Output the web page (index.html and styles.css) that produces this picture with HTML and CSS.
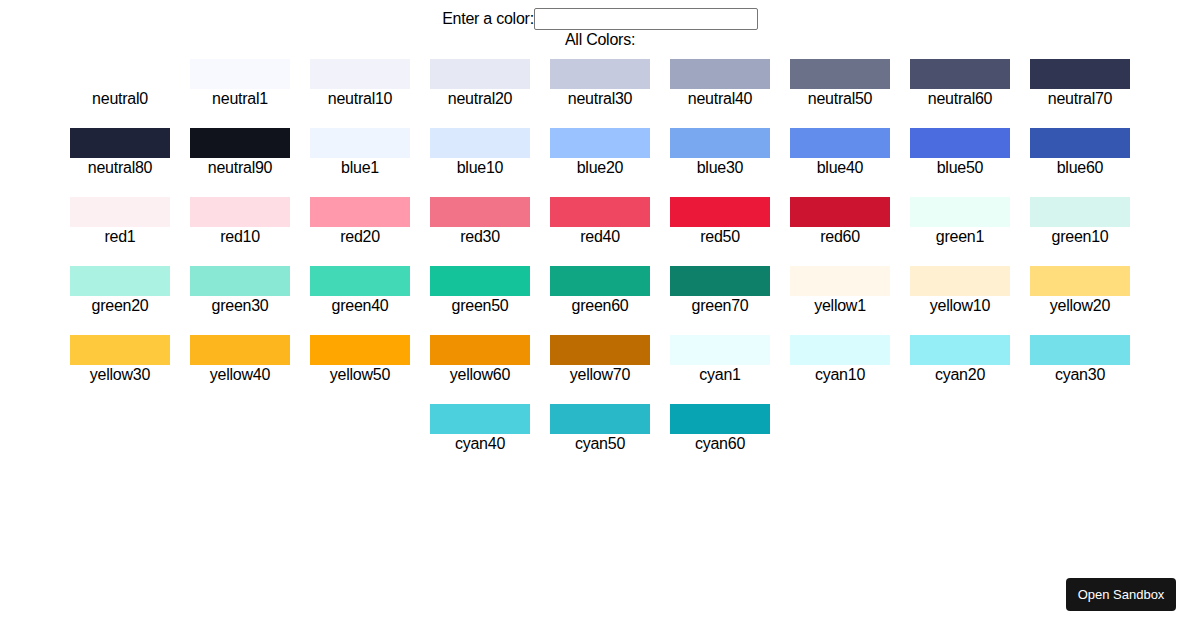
FILE: index.html
```html
<!DOCTYPE html>
<html>
<head>
<meta charset="utf-8">
<link rel="stylesheet" href="styles.css">
</head>
<body>
<div class="header">
  <label class="prompt">Enter a color:<input class="color-input" type="text"></label>
  <div class="title">All Colors:</div>
</div>
<div class="grid">
  <div class="item"><div class="swatch" style="background:#ffffff"></div><div class="name">neutral0</div></div>
  <div class="item"><div class="swatch" style="background:#f8f9fe"></div><div class="name">neutral1</div></div>
  <div class="item"><div class="swatch" style="background:#f1f2fa"></div><div class="name">neutral10</div></div>
  <div class="item"><div class="swatch" style="background:#e6e8f4"></div><div class="name">neutral20</div></div>
  <div class="item"><div class="swatch" style="background:#c6cade"></div><div class="name">neutral30</div></div>
  <div class="item"><div class="swatch" style="background:#9fa6c0"></div><div class="name">neutral40</div></div>
  <div class="item"><div class="swatch" style="background:#6a7189"></div><div class="name">neutral50</div></div>
  <div class="item"><div class="swatch" style="background:#4b506d"></div><div class="name">neutral60</div></div>
  <div class="item"><div class="swatch" style="background:#303651"></div><div class="name">neutral70</div></div>
  <div class="item"><div class="swatch" style="background:#1f233a"></div><div class="name">neutral80</div></div>
  <div class="item"><div class="swatch" style="background:#10121c"></div><div class="name">neutral90</div></div>
  <div class="item"><div class="swatch" style="background:#eef5ff"></div><div class="name">blue1</div></div>
  <div class="item"><div class="swatch" style="background:#dbe9ff"></div><div class="name">blue10</div></div>
  <div class="item"><div class="swatch" style="background:#99c2ff"></div><div class="name">blue20</div></div>
  <div class="item"><div class="swatch" style="background:#79a8f1"></div><div class="name">blue30</div></div>
  <div class="item"><div class="swatch" style="background:#628dec"></div><div class="name">blue40</div></div>
  <div class="item"><div class="swatch" style="background:#4a6cdf"></div><div class="name">blue50</div></div>
  <div class="item"><div class="swatch" style="background:#3657b1"></div><div class="name">blue60</div></div>
  <div class="item"><div class="swatch" style="background:#fcf0f3"></div><div class="name">red1</div></div>
  <div class="item"><div class="swatch" style="background:#ffdde4"></div><div class="name">red10</div></div>
  <div class="item"><div class="swatch" style="background:#ff99ab"></div><div class="name">red20</div></div>
  <div class="item"><div class="swatch" style="background:#f27388"></div><div class="name">red30</div></div>
  <div class="item"><div class="swatch" style="background:#ef4662"></div><div class="name">red40</div></div>
  <div class="item"><div class="swatch" style="background:#ec1839"></div><div class="name">red50</div></div>
  <div class="item"><div class="swatch" style="background:#cc1330"></div><div class="name">red60</div></div>
  <div class="item"><div class="swatch" style="background:#e9fff7"></div><div class="name">green1</div></div>
  <div class="item"><div class="swatch" style="background:#d5f5ee"></div><div class="name">green10</div></div>
  <div class="item"><div class="swatch" style="background:#abf2e3"></div><div class="name">green20</div></div>
  <div class="item"><div class="swatch" style="background:#88e8d3"></div><div class="name">green30</div></div>
  <div class="item"><div class="swatch" style="background:#41d9b6"></div><div class="name">green40</div></div>
  <div class="item"><div class="swatch" style="background:#15c39b"></div><div class="name">green50</div></div>
  <div class="item"><div class="swatch" style="background:#10a583"></div><div class="name">green60</div></div>
  <div class="item"><div class="swatch" style="background:#0e7f68"></div><div class="name">green70</div></div>
  <div class="item"><div class="swatch" style="background:#fff7e9"></div><div class="name">yellow1</div></div>
  <div class="item"><div class="swatch" style="background:#fff0d1"></div><div class="name">yellow10</div></div>
  <div class="item"><div class="swatch" style="background:#ffdd7d"></div><div class="name">yellow20</div></div>
  <div class="item"><div class="swatch" style="background:#ffc93e"></div><div class="name">yellow30</div></div>
  <div class="item"><div class="swatch" style="background:#feb61f"></div><div class="name">yellow40</div></div>
  <div class="item"><div class="swatch" style="background:#ffa600"></div><div class="name">yellow50</div></div>
  <div class="item"><div class="swatch" style="background:#f09200"></div><div class="name">yellow60</div></div>
  <div class="item"><div class="swatch" style="background:#bc6c00"></div><div class="name">yellow70</div></div>
  <div class="item"><div class="swatch" style="background:#eafeff"></div><div class="name">cyan1</div></div>
  <div class="item"><div class="swatch" style="background:#d9fcfe"></div><div class="name">cyan10</div></div>
  <div class="item"><div class="swatch" style="background:#95edf5"></div><div class="name">cyan20</div></div>
  <div class="item"><div class="swatch" style="background:#74e0ea"></div><div class="name">cyan30</div></div>
  <div class="item"><div class="swatch" style="background:#4dd0dd"></div><div class="name">cyan40</div></div>
  <div class="item"><div class="swatch" style="background:#28b8c8"></div><div class="name">cyan50</div></div>
  <div class="item"><div class="swatch" style="background:#08a4b4"></div><div class="name">cyan60</div></div>
</div>
<button class="sandbox">Open Sandbox</button>
</body>
</html>
```
FILE: styles.css
```css
body {
  margin: 8px;
  font-family: "Liberation Sans", Arial, sans-serif;
  font-size: 16px;
  letter-spacing: -0.25px;
  color: #000;
  background: #fff;
}
.header {
  text-align: center;
}
.prompt {
  display: inline-flex;
  align-items: center;
  height: 22px;
}
.color-input {
  width: 224px;
  height: 22px;
  box-sizing: border-box;
  margin: 0;
  border: 1px solid #767676;
  border-radius: 2px;
  padding: 1px 2px;
  font: inherit;
}
.title {
  line-height: 19px;
}
.grid {
  display: flex;
  flex-wrap: wrap;
  justify-content: center;
  width: 1080px;
  margin: 0 auto;
}
.item {
  width: 100px;
  margin: 10px;
  text-align: center;
}
.swatch {
  height: 30px;
}
.name {
  line-height: 19px;
}
.sandbox {
  position: fixed;
  right: 24px;
  bottom: 19px;
  width: 110px;
  height: 33px;
  background: #151515;
  color: #fff;
  border: none;
  border-radius: 4px;
  font-family: "Liberation Sans", Arial, sans-serif;
  font-size: 13px;
  letter-spacing: 0;
  padding: 0;
}
```
